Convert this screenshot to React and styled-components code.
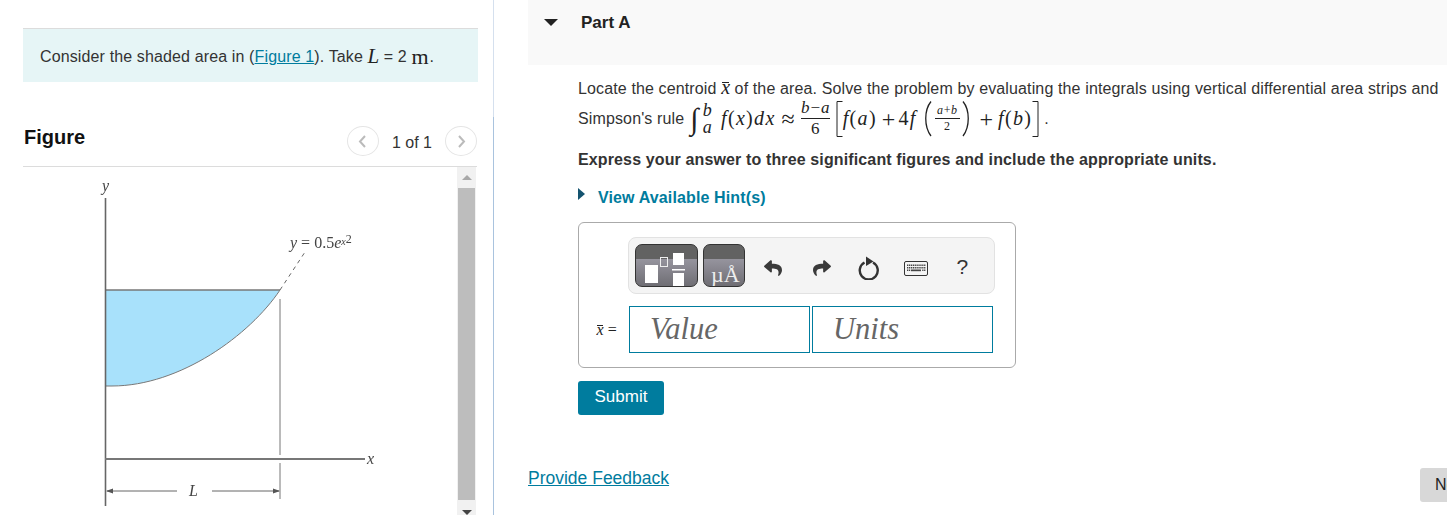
import React from 'react';
import styled, { createGlobalStyle } from 'styled-components';
import { FaReply, FaShare } from 'react-icons/fa';

const GlobalStyle = createGlobalStyle`
  html, body {
    margin: 0;
    padding: 0;
    background: #fff;
    overflow: hidden;
  }
  body {
    font-family: "Liberation Sans", Arial, sans-serif;
    font-size: 16px;
    letter-spacing: 0.13px;
    color: #333;
  }
`;

const Page = styled.div`
  display: flex;
  width: 1447px;
  height: 515px;
  overflow: hidden;
`;

const LeftPane = styled.section`
  width: 470px;
  padding: 28px 0 0 23px;
  flex: none;
`;

const Divider = styled.div`
  width: 1px;
  flex: none;
  background: linear-gradient(#d5e0ee 0, #d5e0ee 117px, #a9c3de 117px);
`;

const Intro = styled.div`
  width: 455px;
  height: 54px;
  border-top: 1px solid #dcdcdc;
  background: #e6f5f6;
  padding: 2px 0 0 17px;
  box-sizing: border-box;
  display: flex;
  align-items: center;
  white-space: pre;
`;

const Link = styled.a`
  color: #007c9e;
  text-decoration: underline;
`;

const MathLetter = styled.span`
  font-family: "Liberation Serif", serif;
  font-style: ${(p) => (p.$roman ? 'normal' : 'italic')};
  font-size: ${(p) => p.$size || 18}px;
  letter-spacing: ${(p) => p.$spacing || 0}px;
  line-height: 1;
  color: #222;
`;

const FigureHeader = styled.div`
  width: 454px;
  height: 30px;
  margin-top: 44px;
  padding-bottom: 10px;
  border-bottom: 1px solid #dcdcdc;
  display: flex;
  justify-content: space-between;
`;

const FigureTitle = styled.h2`
  margin: 0 0 0 1px;
  font-size: 20px;
  line-height: 22px;
  font-weight: 700;
  letter-spacing: 0;
  color: #111;
`;

const Pager = styled.div`
  display: flex;
  align-items: center;
  gap: 13px;
`;

const PagerCount = styled.span`
  padding-top: 3px;
  letter-spacing: 0;
`;

const PagerButton = styled.div`
  width: 30px;
  height: 28px;
  border: 1px solid #e5e5e5;
  border-radius: 50%;
  display: flex;
  align-items: center;
  justify-content: center;
`;

const FigureBody = styled.div`
  display: flex;
  width: 454px;
  height: 348px;
`;

const FigureSvg = styled.svg`
  width: 434px;
  height: 348px;
  flex: none;
  filter: blur(0.35px);
`;

const ScrollTrack = styled.div`
  width: 19px;
  height: 348px;
  background: #f1f1f1;
  display: flex;
  flex-direction: column;
  align-items: center;
`;

const ScrollArrow = styled.div`
  width: 0;
  height: 0;
  border-left: 5px solid transparent;
  border-right: 5px solid transparent;
  border-bottom: ${(p) => (p.$down ? 'none' : '5px solid #a8a8a8')};
  border-top: ${(p) => (p.$down ? '5px solid #444' : 'none')};
  margin: ${(p) => (p.$down ? '10px 0 0' : '8px 0 8px')};
`;

const ScrollThumb = styled.div`
  width: 17px;
  height: 312px;
  background: #bdbdbd;
`;

const RightPane = styled.section`
  flex: 1;
  min-width: 0;
  padding-left: 34px;
`;

const PartHeader = styled.div`
  height: 65px;
  background: #f9f9f9;
  display: flex;
  align-items: flex-start;
  padding: 12px 0 0 16px;
  box-sizing: border-box;
`;

const Caret = styled.div`
  width: 0;
  height: 0;
  margin-top: 7px;
  border-left: 7px solid transparent;
  border-right: 7px solid transparent;
  border-top: 7px solid #222;
`;

const PartTitle = styled.h3`
  margin: 0 0 0 23px;
  font-size: 17px;
  line-height: 22px;
  font-weight: 700;
  letter-spacing: 0;
  color: #222;
`;

const Question = styled.div`
  padding: 12px 0 0 50px;
`;

const TextLine = styled.div`
  height: 22px;
  line-height: 22px;
  white-space: nowrap;
`;

const MathLine = styled.div`
  height: 37px;
  padding-top: 2px;
  box-sizing: border-box;
  display: flex;
  align-items: center;
  white-space: pre;
`;

const Formula = styled.span`
  display: inline-flex;
  align-items: center;
  margin: 0 5px 0 6px;
  font-family: "Liberation Serif", serif;
  font-size: 20px;
  letter-spacing: 1.3px;
  color: #222;
`;

const Integral = styled.span`
  font-size: 30px;
  line-height: 34px;
`;

const Limits = styled.span`
  display: inline-flex;
  flex-direction: column;
  font-style: italic;
  font-size: 18px;
  line-height: 17px;
  margin: 0 8px 0 3px;
`;

const Fraction = styled.span`
  display: inline-flex;
  flex-direction: column;
  align-items: center;
  text-align: center;
  letter-spacing: 0;
  font-size: ${(p) => p.$size || 17}px;
  line-height: ${(p) => p.$line || 20}px;
  width: ${(p) => p.$w}px;
  margin: ${(p) => p.$margin || '0'};
`;

const Numerator = styled.span`
  font-style: italic;
  width: 100%;
  border-bottom: 1px solid #222;
`;

const Italic = styled.i`
  font-style: italic;
`;

const Operator = styled.span`
  font-size: 24px;
  line-height: 24px;
  letter-spacing: 0;
  margin: ${(p) => p.$margin || '0 4px'};
`;

const Delimiter = styled.svg`
  flex: none;
  margin: ${(p) => p.$margin || '0'};
`;

const Emphasis = styled.div`
  margin-top: 13px;
  line-height: 22px;
  font-weight: 700;
`;

const HintRow = styled.div`
  margin-top: 16px;
  display: flex;
  align-items: center;
  line-height: 22px;
  font-weight: 700;
  color: #007c9e;
  height: 22px;
`;

const HintCaret = styled.span`
  width: 0;
  height: 0;
  margin: -8px 13px 0 0;
  border-top: 6px solid transparent;
  border-bottom: 6px solid transparent;
  border-left: 7px solid #14536f;
`;

const AnswerBox = styled.div`
  width: 438px;
  height: 146px;
  margin-top: 13px;
  padding-top: 14px;
  border: 1px solid #aaa;
  border-radius: 6px;
  box-sizing: border-box;
`;

const Toolbar = styled.div`
  width: 367px;
  height: 57px;
  margin-left: 49px;
  padding-left: 6px;
  border: 1px solid #e2e2e2;
  border-radius: 8px;
  background: #f4f4f4;
  box-sizing: border-box;
  display: flex;
  align-items: center;
`;

const TemplateButton = styled.div`
  position: relative;
  width: ${(p) => p.$w}px;
  height: 43px;
  margin-right: ${(p) => p.$gap}px;
  border: 1px solid #333;
  border-radius: 7px;
  box-sizing: border-box;
  overflow: hidden;
  color: #fff;
  flex: none;
  background: linear-gradient(#626262 0, #626262 14px, #96949e 14px, #6f6e74 100%);
`;

const TemplateArt = styled.svg`
  position: absolute;
  left: 0;
  top: 0;
`;

const UnitsGlyph = styled.span`
  position: absolute;
  left: 7px;
  bottom: -2px;
  font-family: "Liberation Serif", serif;
  font-size: 22px;
  line-height: 26px;
  letter-spacing: 0;
  white-space: pre;
  color: #eee;
`;

const ToolSlot = styled.div`
  width: ${(p) => p.$w}px;
  padding-top: 5px;
  display: flex;
  justify-content: center;
  align-items: center;
  color: #3a3a3a;
  flex: none;
`;

const HelpMark = styled.span`
  font-size: 21px;
  line-height: 24px;
  margin-top: -2px;
  color: #333;
`;

const AnswerRow = styled.div`
  display: flex;
  margin-top: 12px;
  gap: 2px;
`;

const AnswerLabel = styled.div`
  width: 48px;
  padding-right: 10px;
  box-sizing: border-box;
  text-align: right;
  line-height: 47px;
  font-size: 16px;
  font-family: "Liberation Serif", serif;
  color: #222;
`;

const Bar = styled.span`
  position: relative;
  font-style: italic;

  &::before {
    content: "";
    position: absolute;
    left: 1px;
    right: 1px;
    top: 0.28em;
    height: 1px;
    background: #222;
  }
`;

const Field = styled.div`
  width: 181px;
  height: 47px;
  padding-left: 20px;
  border: 1px solid #007c9e;
  box-sizing: border-box;
  font-family: "Liberation Serif", serif;
  font-style: italic;
  font-size: 30.5px;
  line-height: 44px;
  letter-spacing: 0;
  color: #666;
`;

const SubmitButton = styled.button`
  display: block;
  width: 86px;
  height: 34px;
  margin-top: 13px;
  border: 0;
  border-radius: 3px;
  background: #007c9e;
  color: #fff;
  font: 17px "Liberation Sans", Arial, sans-serif;
  padding: 0 0 2px;
`;

const FooterRow = styled.div`
  display: flex;
  justify-content: space-between;
  align-items: flex-start;
  margin-top: 53px;
  margin-right: -43px;
`;

const Feedback = styled.a`
  font-size: 17.5px;
  line-height: 20px;
  letter-spacing: 0;
  color: #007c9e;
  text-decoration: underline;
`;

const NextButton = styled.button`
  width: 70px;
  height: 34px;
  padding: 0 0 0 15px;
  border: 0;
  border-radius: 3px;
  background: #d8d8d8;
  color: #222;
  text-align: left;
  font: 16px "Liberation Sans", Arial, sans-serif;
`;

function Chevron({ dir }) {
  const d = dir === 'left' ? 'M9 2 L4 7.5 L9 13' : 'M4 2 L9 7.5 L4 13';
  return (
    <svg width="13" height="15" viewBox="0 0 13 15">
      <path d={d} fill="none" stroke="#bbb" strokeWidth="2" />
    </svg>
  );
}

function ShadedFigure() {
  return (
    <FigureSvg viewBox="23 167 434 348">
      <path d="M105 290 H280 C250 335 180 386 112 386 H105 Z" fill="#a8e1fb" />
      <path d="M105 290 H280" stroke="#777" strokeWidth="1.6" fill="none" />
      <path d="M280 290 C250 335 180 386 112 386 H105" stroke="#777" strokeWidth="1" fill="none" />
      <path d="M105.5 198 V506" stroke="#666" strokeWidth="1.6" />
      <path d="M105 459 H365" stroke="#777" strokeWidth="2" />
      <path d="M280 299 V455 M280 463 V499" stroke="#777" strokeWidth="1" />
      <path d="M280 290 L305 252" stroke="#666" strokeWidth="1" strokeDasharray="4 4" />
      <path d="M107 491 H177 M212 491 H279" stroke="#666" strokeWidth="1" />
      <path d="M106 491 l7 -2.5 v5 Z M280 491 l-7 -2.5 v5 Z" fill="#555" />
      <g fontFamily="Liberation Serif, serif" fill="#444" letterSpacing="0">
        <text x="102" y="191" fontSize="16" fontStyle="italic">y</text>
        <text x="367" y="464" fontSize="16" fontStyle="italic">x</text>
        <text x="189" y="496" fontSize="16" fontStyle="italic">L</text>
        <text x="290" y="248" fontSize="16">
          <tspan fontStyle="italic">y</tspan> = 0.5<tspan fontStyle="italic">e</tspan>
          <tspan fontSize="10" dy="-3" fontStyle="italic">x</tspan>
          <tspan fontSize="12" dy="-2">2</tspan>
        </text>
      </g>
    </FigureSvg>
  );
}

function Bracket({ open, height, width = 7, margin }) {
  const d = open
    ? `M${width - 0.5} 0.5 H1 V${height - 0.5} H${width - 0.5}`
    : `M0.5 0.5 H${width - 1} V${height - 0.5} H0.5`;
  return (
    <Delimiter width={width} height={height} $margin={margin}>
      <path d={d} fill="none" stroke="#222" />
    </Delimiter>
  );
}

function Paren({ open, margin }) {
  const d = open ? 'M8 0.5 C1 9 1 26 8 35' : 'M1 0.5 C8 9 8 26 1 35';
  return (
    <Delimiter width="9" height="36" $margin={margin}>
      <path d={d} fill="none" stroke="#222" strokeWidth="1.3" />
    </Delimiter>
  );
}

function SimpsonFormula() {
  return (
    <Formula>
      <Integral>∫</Integral>
      <Limits>
        <span>b</span>
        <span>a</span>
      </Limits>
      <Italic>f</Italic>(<Italic>x</Italic>)<Italic>dx</Italic>
      <Operator $margin="0 6px 0 6px">≈</Operator>
      <Fraction $w={29}>
        <Numerator>b−a</Numerator>
        <span>6</span>
      </Fraction>
      <Bracket open height={36} margin="0 0 0 6px" />
      <Italic>f</Italic>(<Italic>a</Italic>)
      <Operator $margin="0 3px 0 5px">+</Operator>
      4<Italic>f</Italic>
      <Paren open margin="0 3px 0 6px" />
      <Fraction $w={25} $size={12} $line={15}>
        <Numerator>a+b</Numerator>
        <span>2</span>
      </Fraction>
      <Paren margin="0 0 0 2px" />
      <Operator $margin="0 5px 0 9px">+</Operator>
      <Italic>f</Italic>(<Italic>b</Italic>)
      <Bracket height={36} />
    </Formula>
  );
}

function LayoutIcon() {
  return (
    <TemplateArt width="61" height="41" viewBox="0 0 61 41">
      <rect x="9" y="20" width="13" height="18" fill="#fff" />
      <rect x="24.5" y="12.5" width="7" height="9" fill="none" stroke="#eee" strokeWidth="1" />
      <rect x="37" y="8" width="11" height="12" fill="#fff" />
      <rect x="36" y="24" width="13" height="1.5" fill="#fff" />
      <rect x="37" y="28" width="11" height="13" fill="#fff" />
    </TemplateArt>
  );
}

function RotateIcon() {
  return (
    <svg width="22" height="24" viewBox="0 0 22 24">
      <path d="M6.5 6.5 A9 9 0 1 0 15 6.5" fill="none" stroke="#333" strokeWidth="2.4" />
      <path d="M8 0.5 L15.5 5.5 L8 10 Z" fill="#333" />
    </svg>
  );
}

function KeyboardIcon() {
  const keys = [];
  for (let row = 0; row < 3; row++) {
    for (let col = 0; col < 10; col++) {
      if (row === 2 && col > 1 && col < 8) continue;
      keys.push(<rect key={`${row}-${col}`} x={3 + col * 1.9} y={3.5 + row * 2.5} width="1.3" height="1.5" fill="#444" />);
    }
  }
  return (
    <svg width="24" height="15" viewBox="0 0 24 15">
      <rect x="0.5" y="0.5" width="23" height="14" rx="1.5" fill="#f4f4f4" stroke="#333" />
      {keys}
      <rect x="7" y="8.5" width="10" height="1.7" fill="#444" />
    </svg>
  );
}

export default function App() {
  return (
    <Page>
      <GlobalStyle />
      <LeftPane>
        <Intro>
          Consider the shaded area in (<Link>Figure 1</Link>). Take <MathLetter $size={21}>L</MathLetter> = 2 <MathLetter $roman $size={22} $spacing={1}>m</MathLetter>.
        </Intro>
        <FigureHeader>
          <FigureTitle>Figure</FigureTitle>
          <Pager>
            <PagerButton><Chevron dir="left" /></PagerButton>
            <PagerCount>1 of 1</PagerCount>
            <PagerButton><Chevron dir="right" /></PagerButton>
          </Pager>
        </FigureHeader>
        <FigureBody>
          <ShadedFigure />
          <ScrollTrack>
            <ScrollArrow />
            <ScrollThumb />
            <ScrollArrow $down />
          </ScrollTrack>
        </FigureBody>
      </LeftPane>
      <Divider />
      <RightPane>
        <PartHeader>
          <Caret />
          <PartTitle>Part A</PartTitle>
        </PartHeader>
        <Question>
          <TextLine>
            Locate the centroid <MathLetter $size={20}><Bar>x</Bar></MathLetter> of the area. Solve the problem by evaluating the integrals using vertical differential area strips and
          </TextLine>
          <MathLine>
            Simpson's rule
            <SimpsonFormula />.
          </MathLine>
          <Emphasis>Express your answer to three significant figures and include the appropriate units.</Emphasis>
          <HintRow>
            <HintCaret />
            View Available Hint(s)
          </HintRow>
          <AnswerBox>
            <Toolbar>
              <TemplateButton $w={63} $gap={5}><LayoutIcon /></TemplateButton>
              <TemplateButton $w={42} $gap={3}><UnitsGlyph>µÅ</UnitsGlyph></TemplateButton>
              <ToolSlot $w={50}><FaReply size={18} /></ToolSlot>
              <ToolSlot $w={48}><FaShare size={18} /></ToolSlot>
              <ToolSlot $w={46}><RotateIcon /></ToolSlot>
              <ToolSlot $w={47}><KeyboardIcon /></ToolSlot>
              <ToolSlot $w={47}><HelpMark>?</HelpMark></ToolSlot>
            </Toolbar>
            <AnswerRow>
              <AnswerLabel><Bar>x</Bar> =</AnswerLabel>
              <Field>Value</Field>
              <Field>Units</Field>
            </AnswerRow>
          </AnswerBox>
          <SubmitButton>Submit</SubmitButton>
        </Question>
        <FooterRow>
          <Feedback>Provide Feedback</Feedback>
          <NextButton>Next</NextButton>
        </FooterRow>
      </RightPane>
    </Page>
  );
}
